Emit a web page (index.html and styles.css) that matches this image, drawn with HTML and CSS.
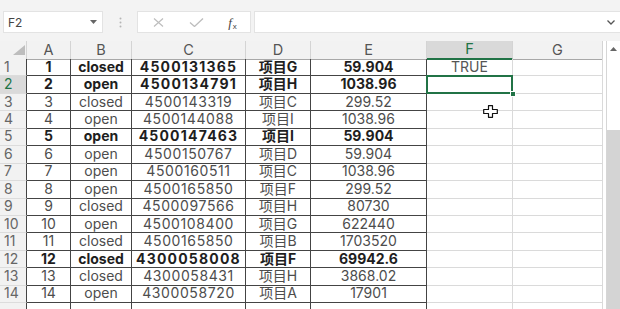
FILE: index.html
```html
<!DOCTYPE html>
<html lang="zh-CN">
<head>
    <meta charset="UTF-8">
    <title>Sheet1</title>
    <link rel="stylesheet" href="styles.css">
</head>
<body>
    <div class="toolbar">
        <div class="namebox">
            <span>F2</span>
            <svg width="7" height="4" viewBox="0 0 7 4"><path d="M0 0h7L3.5 4z" fill="#666"/></svg>
        </div>
        <div class="grip">
            <svg width="3" height="11" viewBox="0 0 3 11"><circle cx="1.5" cy="1.5" r="1" fill="#b5b5b5"/><circle cx="1.5" cy="5.5" r="1" fill="#b5b5b5"/><circle cx="1.5" cy="9.5" r="1" fill="#b5b5b5"/></svg>
        </div>
        <div class="fbtns">
            <span><svg width="11" height="9" viewBox="0 0 11 9"><path d="M1 0.5l9 8M10 0.5l-9 8" stroke="#bdbdbd" stroke-width="1.2" fill="none"/></svg></span>
            <span><svg width="15" height="9" viewBox="0 0 15 9"><path d="M1 4.5l4.5 4L14 0.5" stroke="#bdbdbd" stroke-width="1.3" fill="none"/></svg></span>
            <span class="fx"><i>f</i><span class="sx">x</span></span>
        </div>
        <div class="formula">
            <svg width="8" height="5" viewBox="0 0 8 5"><path d="M0.5 0.5l3.5 3.5 3.5-3.5" stroke="#555" stroke-width="1.3" fill="none"/></svg>
        </div>
    </div>

    <div class="sheet">
        <div class="grid">
            <div class="row head">
                <div class="corner"><svg width="27" height="18" viewBox="0 0 27 18"><path d="M13 14h12V4z" fill="#bdbdbd"/></svg></div>
                <div class="hc">A</div>
                <div class="hc">B</div>
                <div class="hc">C</div>
                <div class="hc">D</div>
                <div class="hc">E</div>
                <div class="hc sel">F</div>
                <div class="hc">G</div>
            </div>
            <div class="row bold">
                <div class="rh">1</div>
                <div class="c">1</div><div class="c">closed</div><div class="c po">4500131365</div><div class="c">项目G</div><div class="c">59.904</div>
                <div class="c x reg">TRUE</div><div class="c x"></div>
            </div>
            <div class="row bold">
                <div class="rh sel">2</div>
                <div class="c">2</div><div class="c">open</div><div class="c po">4500134791</div><div class="c">项目H</div><div class="c">1038.96</div>
                <div class="c x active"><span class="handle"></span></div><div class="c x"></div>
            </div>
            <div class="row">
                <div class="rh">3</div>
                <div class="c">3</div><div class="c">closed</div><div class="c po">4500143319</div><div class="c">项目C</div><div class="c">299.52</div>
                <div class="c x"></div><div class="c x"></div>
            </div>
            <div class="row">
                <div class="rh">4</div>
                <div class="c">4</div><div class="c">open</div><div class="c po">4500144088</div><div class="c">项目I</div><div class="c">1038.96</div>
                <div class="c x"></div><div class="c x"></div>
            </div>
            <div class="row bold">
                <div class="rh">5</div>
                <div class="c">5</div><div class="c">open</div><div class="c po">4500147463</div><div class="c">项目I</div><div class="c">59.904</div>
                <div class="c x"></div><div class="c x"></div>
            </div>
            <div class="row">
                <div class="rh">6</div>
                <div class="c">6</div><div class="c">open</div><div class="c po">4500150767</div><div class="c">项目D</div><div class="c">59.904</div>
                <div class="c x"></div><div class="c x"></div>
            </div>
            <div class="row">
                <div class="rh">7</div>
                <div class="c">7</div><div class="c">open</div><div class="c po">4500160511</div><div class="c">项目C</div><div class="c">1038.96</div>
                <div class="c x"></div><div class="c x"></div>
            </div>
            <div class="row">
                <div class="rh">8</div>
                <div class="c">8</div><div class="c">open</div><div class="c po">4500165850</div><div class="c">项目F</div><div class="c">299.52</div>
                <div class="c x"></div><div class="c x"></div>
            </div>
            <div class="row">
                <div class="rh">9</div>
                <div class="c">9</div><div class="c">closed</div><div class="c po">4500097566</div><div class="c">项目H</div><div class="c">80730</div>
                <div class="c x"></div><div class="c x"></div>
            </div>
            <div class="row">
                <div class="rh">10</div>
                <div class="c">10</div><div class="c">open</div><div class="c po">4500108400</div><div class="c">项目G</div><div class="c">622440</div>
                <div class="c x"></div><div class="c x"></div>
            </div>
            <div class="row">
                <div class="rh">11</div>
                <div class="c">11</div><div class="c">closed</div><div class="c po">4500165850</div><div class="c">项目B</div><div class="c">1703520</div>
                <div class="c x"></div><div class="c x"></div>
            </div>
            <div class="row bold">
                <div class="rh">12</div>
                <div class="c">12</div><div class="c">closed</div><div class="c po">4300058008</div><div class="c">项目F</div><div class="c">69942.6</div>
                <div class="c x"></div><div class="c x"></div>
            </div>
            <div class="row">
                <div class="rh">13</div>
                <div class="c">13</div><div class="c">closed</div><div class="c po">4300058431</div><div class="c">项目H</div><div class="c">3868.02</div>
                <div class="c x"></div><div class="c x"></div>
            </div>
            <div class="row">
                <div class="rh">14</div>
                <div class="c">14</div><div class="c">open</div><div class="c po">4300058720</div><div class="c">项目A</div><div class="c">17901</div>
                <div class="c x"></div><div class="c x"></div>
            </div>
            <div class="row">
                <div class="rh"></div>
                <div class="c"></div><div class="c"></div><div class="c"></div><div class="c"></div><div class="c"></div>
                <div class="c x"></div><div class="c x"></div>
            </div>
        </div>
        <div class="vscroll">
            <div class="up"><svg width="7" height="4" viewBox="0 0 7 4"><path d="M0 4h7L3.5 0z" fill="#666"/></svg></div>
            <div class="track"></div>
            <div class="thumb"></div>
        </div>

        <!-- mouse cursor over the sheet -->
        <svg class="cursor" width="15" height="13" viewBox="0 0 15 13"><path d="M5.5 0.7h4v3.8h4.8v4h-4.8v3.8h-4v-3.8H0.7v-4h4.8z" fill="#fff" stroke="#111" stroke-width="1.2" stroke-linejoin="round"/></svg>
    </div>
</body>
</html>
```

FILE: styles.css
```css
*{
    margin: 0;
    padding: 0;
    box-sizing: border-box;
}
body{
    width: 620px;
    height: 309px;
    overflow: hidden;
    background: #fff;
    font-family: Inter, "Noto Sans CJK SC", sans-serif;
}

/* formula bar */
.toolbar{
    height: 41px;
    background: #f3f3f3;
    display: flex;
    align-items: flex-start;
    padding-top: 11px;
}
.namebox{
    width: 100px;
    height: 22px;
    margin-left: 3px;
    background: #fff;
    border: 1px solid #e3e3e3;
    display: flex;
    align-items: center;
    justify-content: space-between;
    padding: 0 5px 0 4px;
    font-size: 12px;
    color: #444;
}
.grip{
    width: 34px;
    height: 22px;
    display: flex;
    align-items: center;
    justify-content: center;
}
.fbtns{
    width: 114px;
    height: 22px;
    background: #fff;
    border: 1px solid #e3e3e3;
    display: grid;
    grid-template-columns: 40px 36px 36px;
    align-items: center;
}
.fbtns span{
    display: flex;
    justify-content: center;
}
.fbtns .fx{
    font-family: "Liberation Serif", serif;
    font-size: 13px;
    color: #444;
    line-height: 1;
    align-items: baseline;
}
.fbtns .fx .sx{
    font-size: 8px;
    font-family: "Liberation Sans", sans-serif;
    position: relative;
    top: 2px;
    left: 1px;
}
.formula{
    flex: 1;
    height: 22px;
    margin-left: 3px;
    background: #fff;
    border: 1px solid #e3e3e3;
    border-right: none;
    display: flex;
    align-items: center;
    justify-content: flex-end;
    padding-right: 5px;
}

/* sheet */
.sheet{
    position: relative;
    display: flex;
    align-items: flex-start;
}
.grid{
    width: 603px;
}
.row{
    display: grid;
    grid-template-columns: 27px 44px 61px 114px 65px 116px 86px 90px;
    height: 17.45px;
    font-size: 14px;
    line-height: 1;
    color: #4d4d4d;
}
.row.bold{
    font-weight: 700;
    color: #1e1e1e;
}
.row.head{
    height: 18px;
}
.corner{
    background: #f2f2f2;
    border-right: 1px solid #d4d4d4;
    border-bottom: 1px solid #a8a8a8;
}
.corner svg{
    display: block;
}
.hc{
    background: #f2f2f2;
    border-right: 1px solid #d4d4d4;
    border-bottom: 1px solid #a8a8a8;
    font-size: 14.5px;
    color: #555;
    display: flex;
    align-items: center;
    justify-content: center;
}
.hc.sel{
    background: #d9d9d9;
    color: #217346;
    border-bottom: 2px solid #217346;
}
.rh{
    background: #f2f2f2;
    border-right: 1px solid #444;
    border-bottom: 1px solid #dcdcdc;
    font-size: 14px;
    font-weight: 400;
    color: #666;
    padding-left: 4px;
    padding-bottom: 1px;
    display: flex;
    align-items: center;
}
.rh.sel{
    background: #dadada;
    color: #217346;
}
.c{
    border-right: 1px solid #444;
    border-bottom: 1px solid #444;
    padding-bottom: 1px;
    display: flex;
    align-items: center;
    justify-content: center;
    white-space: nowrap;
}
/* PO numbers are set a little wider in the sheet */
.c.po{
    letter-spacing: 0.6px;
}
.row.bold .c.po{
    letter-spacing: 1.2px;
}
.c.x{
    border-right: 1px solid #dadada;
    border-bottom: 1px solid #dadada;
}
.c.reg{
    font-weight: 400;
    color: #555;
}
.c.active{
    position: relative;
}
.c.active::after{
    content: "";
    position: absolute;
    top: -1px;
    left: -1px;
    right: -1px;
    bottom: -1px;
    border: 2px solid #217346;
}
.handle{
    position: absolute;
    right: -4px;
    bottom: -4px;
    width: 6px;
    height: 6px;
    background: #217346;
    border: 1px solid #fff;
    z-index: 1;
}

/* vertical scrollbar */
.vscroll{
    width: 14px;
    margin-left: 3px;
    border-left: 1px solid #d6d6d6;
    display: flex;
    flex-direction: column;
    height: 268px;
}
.up{
    flex: none;
    height: 16px;
    display: flex;
    align-items: center;
    justify-content: center;
}
.track{
    flex: none;
    height: 73px;
}
.thumb{
    flex: 1;
    background: #d4d4d4;
}

.cursor{
    position: absolute;
    left: 483px;
    top: 64px;
}
```
